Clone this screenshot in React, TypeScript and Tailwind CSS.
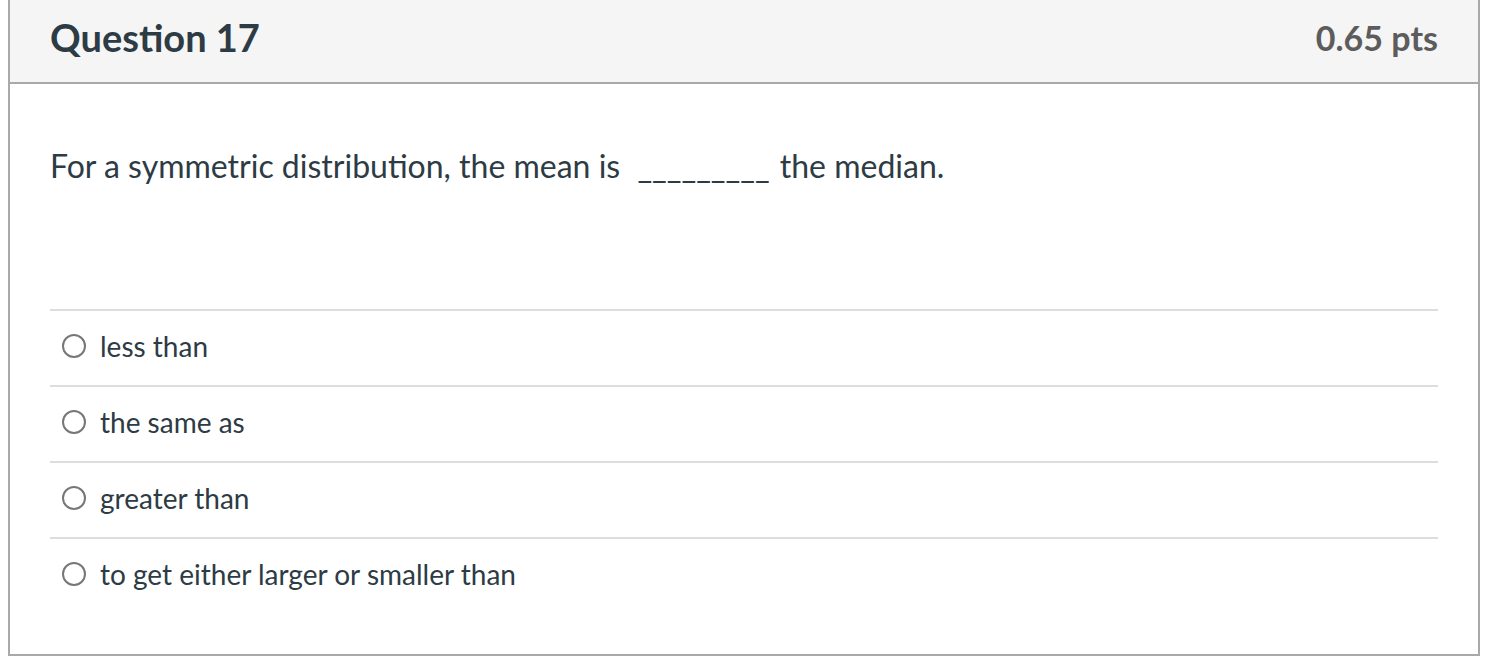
import React from "react";

const answers = ["less than", "the same as", "greater than", "to get either larger or smaller than"];

export default function App() {
  return (
    <div className="bg-white w-[1508px] h-[660px] overflow-hidden" style={{ fontFamily: "Lato, 'Liberation Sans', sans-serif" }}>
      <div className="ml-[8px] w-[1472px] h-[656px] border-2 border-t-0 border-[#a9a9a9] flex flex-col">
        <div className="h-[84px] bg-[#f5f5f5] border-b-2 border-[#a9a9a9] flex items-center justify-between pl-[40px] pr-[40px] pb-[8px]">
          <h2 className="text-[38px] font-bold text-[#2d3b45]">Question 17</h2>
          <span className="text-[34px] font-bold text-[#5c5c5c]">0.65 pts</span>
        </div>
        <div className="px-[40px] pt-[62px]">
          <p className="text-[32px] text-[#2d3b45] leading-[40px]">
            For a symmetric distribution, the mean is <span className="ml-[9px] mr-[2px]">_________</span> the median.
          </p>
          <div className="mt-[123px]">
            {answers.map((a) => (
              <div key={a} className="border-t-2 border-[#dddddd] h-[76px] flex items-center gap-[14px] pl-[12px] pb-[4px]">
                <span className="w-[24px] h-[24px] rounded-full border-2 border-[#777777] bg-white shrink-0" />
                <span className="text-[28px] text-[#2d3b45]">{a}</span>
              </div>
            ))}
          </div>
        </div>
      </div>
    </div>
  );
}
